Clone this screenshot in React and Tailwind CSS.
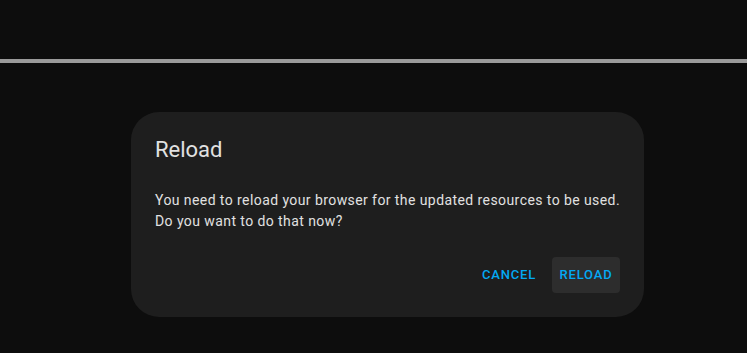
export default function App() {
  return (
    <div className="h-[353px] w-[747px] overflow-hidden bg-[#0d0d0d] font-['Roboto',_sans-serif]">
      <div className="h-[59px]" />
      <div className="h-1 bg-[#9a9a9a]" />

      <div className="ml-[131px] mt-[49px] w-[513px] rounded-[28px] bg-[#1e1e1e] px-6 pt-6 pb-6">
        <h2 className="text-[22px] leading-[28px] text-[#e1e1e1]">Reload</h2>

        <p className="mt-[26px] whitespace-nowrap text-[14px] leading-[21px] tracking-[0.42px] text-[#e1e1e1]">
          You need to reload your browser for the updated resources to be used.
          <br />
          Do you want to do that now?
        </p>

        <div className="mt-[25px] flex justify-end gap-[9px]">
          <button className="h-9 w-[68px] rounded text-[13px] font-medium uppercase tracking-[0.8px] text-[#03a9f4]">
            Cancel
          </button>
          <button className="h-9 w-[68px] rounded bg-[#2d2d2d] text-[13px] font-medium uppercase tracking-[0.8px] text-[#03a9f4]">
            Reload
          </button>
        </div>
      </div>
    </div>
  )
}
